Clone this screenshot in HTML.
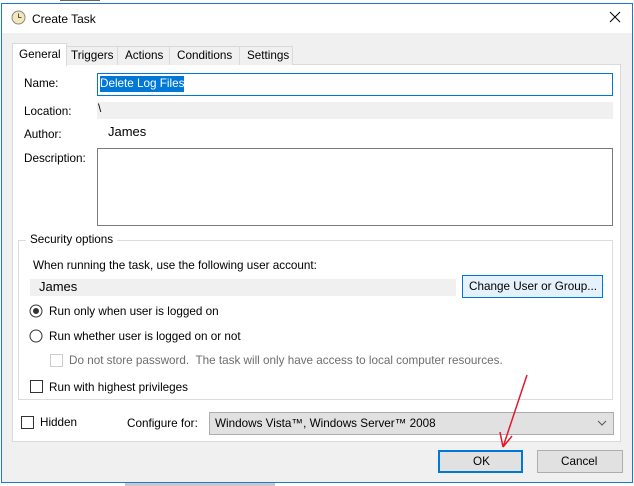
<!DOCTYPE html>
<html><head><style>
*{margin:0;padding:0;box-sizing:border-box}
body{width:634px;height:486px;background:#fff;font-family:"Liberation Sans",sans-serif;font-size:11.7px;color:#000;position:relative;overflow:hidden}
.a{position:absolute}
.t{position:absolute;white-space:nowrap;line-height:14px}
</style></head><body>
<div class="a" style="left:60px;top:0;width:40px;height:3px;border-top:1px solid #666"></div>
<div class="a" style="left:125px;top:482px;width:150px;height:4px;background:#c8c8c8"></div>
<div class="a" style="left:1px;top:3px;width:632px;height:480px;border:1px solid #1979d3;background:#f0f0f0"></div>
<div class="a" style="left:2px;top:4px;width:630px;height:29px;background:#fff"></div>
<svg class="a" style="left:11px;top:10px" width="15" height="15"><circle cx="7.5" cy="7.5" r="6.5" fill="#f3e6b8" stroke="#888"/><path d="M7.5 3.5V7.5H10.5" stroke="#555" fill="none"/></svg>
<div class="t" style="left:32px;top:12px;font-size:12px">Create Task</div>
<svg class="a" style="left:609px;top:11px" width="12" height="12"><path d="M1 1L11 11M11 1L1 11" stroke="#000" stroke-width="1"/></svg>
<div class="a" style="left:12px;top:64px;width:609px;height:378px;border:1px solid #d9d9d9;background:#fff"></div>
<div class="a" style="left:66px;top:46px;width:52px;height:19px;border:1px solid #d9d9d9;border-bottom:none;background:#f0f0f0"></div>
<div class="a" style="left:118px;top:46px;width:52px;height:19px;border:1px solid #d9d9d9;border-bottom:none;border-left:none;background:#f0f0f0"></div>
<div class="a" style="left:170px;top:46px;width:70px;height:19px;border:1px solid #d9d9d9;border-bottom:none;border-left:none;background:#f0f0f0"></div>
<div class="a" style="left:240px;top:46px;width:53px;height:19px;border:1px solid #d9d9d9;border-bottom:none;border-left:none;background:#f0f0f0"></div>
<div class="a" style="left:12px;top:43px;width:55px;height:23px;border:1px solid #d9d9d9;border-bottom:none;background:#fff"></div>
<div class="t" style="left:19px;top:48px">General</div>
<div class="t" style="left:71px;top:49px">Triggers</div>
<div class="t" style="left:125px;top:49px">Actions</div>
<div class="t" style="left:177px;top:49px">Conditions</div>
<div class="t" style="left:247px;top:49px">Settings</div>
<div class="t" style="left:24px;top:77px">Name:</div>
<div class="a" style="left:97px;top:73px;width:516px;height:23px;border:1px solid #0078d7;background:#fff"></div>
<div class="a" style="left:100px;top:76px;width:84px;height:16px;background:#0078d7"></div>
<div class="t" style="left:100px;top:77px;color:#fff">Delete Log Files</div>
<div class="t" style="left:24px;top:105px">Location:</div>
<div class="a" style="left:97px;top:102px;width:516px;height:17px;background:#f0f0f0"></div>
<div class="t" style="left:98px;top:102px">\</div>
<div class="t" style="left:24px;top:128px">Author:</div>
<div class="t" style="left:108px;top:125px;font-size:13px">James</div>
<div class="t" style="left:24px;top:152px">Description:</div>
<div class="a" style="left:97px;top:148px;width:516px;height:78px;border:1px solid #7a7a7a;background:#fff"></div>
<div class="a" style="left:18px;top:240px;width:595px;height:160px;border:1px solid #dcdcdc"></div>
<div class="t" style="left:26px;top:233px;background:#fff;padding:0 4px">Security options</div>
<div class="t" style="left:33px;top:259px">When running the task, use the following user account:</div>
<div class="a" style="left:30px;top:279px;width:426px;height:17px;background:#f0f0f0"></div>
<div class="t" style="left:39px;top:280px;font-size:13px">James</div>
<div class="a" style="left:462px;top:275px;width:141px;height:23px;border:1px solid #0078d7;background:#e5f1fb"></div>
<div class="t" style="left:469px;top:280px">Change User or Group...</div>
<svg class="a" style="left:29px;top:304px" width="14" height="14"><circle cx="7" cy="7" r="6" fill="#fff" stroke="#333"/><circle cx="7" cy="7" r="3" fill="#333"/></svg>
<div class="t" style="left:49px;top:305px">Run only when user is logged on</div>
<svg class="a" style="left:29px;top:329px" width="14" height="14"><circle cx="7" cy="7" r="6" fill="#fff" stroke="#333"/></svg>
<div class="t" style="left:49px;top:330px">Run whether user is logged on or not</div>
<div class="a" style="left:50px;top:354px;width:13px;height:13px;border:1px solid #ccc"></div>
<div class="t" style="left:69px;top:354px;color:#6d6d6d">Do not store password.&nbsp; The task will only have access to local computer resources.</div>
<div class="a" style="left:30px;top:380px;width:13px;height:13px;border:1px solid #333;background:#fff"></div>
<div class="t" style="left:49px;top:381px">Run with highest privileges</div>
<div class="a" style="left:21px;top:416px;width:13px;height:13px;border:1px solid #333;background:#fff"></div>
<div class="t" style="left:40px;top:416px">Hidden</div>
<div class="t" style="left:127px;top:417px">Configure for:</div>
<div class="a" style="left:209px;top:412px;width:405px;height:23px;border:1px solid #adadad;background:#e1e1e1"></div>
<div class="t" style="left:215px;top:417px">Windows Vista™, Windows Server™ 2008</div>
<svg class="a" style="left:597px;top:420px" width="10" height="7"><path d="M1 1L5 5L9 1" stroke="#555" fill="none"/></svg>
<div class="a" style="left:438px;top:450px;width:85px;height:23px;border:2px solid #0078d7;background:#e1e1e1"></div>
<div class="t" style="left:473px;top:455px">OK</div>
<div class="a" style="left:537px;top:450px;width:86px;height:23px;border:1px solid #adadad;background:#e1e1e1"></div>
<div class="t" style="left:561px;top:455px">Cancel</div>
<svg class="a" style="left:0;top:0" width="634" height="486"><path d="M527 375L503 447M503 447L500 432M503 447L512 436" stroke="#e3192b" stroke-width="1.5" fill="none"/></svg>
</body></html>
